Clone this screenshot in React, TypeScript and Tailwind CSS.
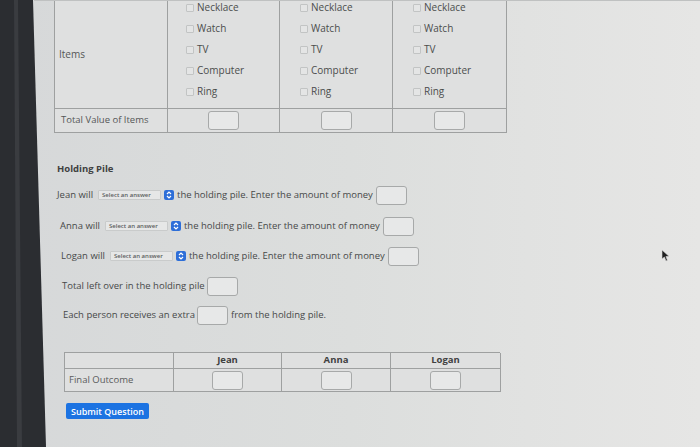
import React from "react";

const items = ["Necklace", "Watch", "TV", "Computer", "Ring"];

function Box({ className = "" }: { className?: string }) {
  return (
    <span
      className={`inline-block w-[31px] h-[19px] shrink-0 rounded-[3px] border border-[#a7a9a9] bg-[#e7e8e8] ${className}`}
    />
  );
}

function Check() {
  return <span className="inline-block w-[8px] h-[8px] shrink-0 rounded-[1px] border border-[#c2c4c4] bg-[#e4e5e5]" />;
}

function ItemList({ pad }: { pad: string }) {
  return (
    <div className={`flex flex-col -mt-[4px] ${pad}`}>
      {items.map((it) => (
        <div key={it} className="flex items-center gap-[3px] h-[21px]">
          <Check />
          <span className="text-[10px] text-[#4b4d4d]">{it}</span>
        </div>
      ))}
    </div>
  );
}

function SelectAnswer() {
  return (
    <span className="flex items-center gap-[3px] ml-[5px] mr-[3px]">
      <span className="flex items-center w-[63px] h-[10px] border border-[#c9cbcb] bg-[#e6e7e7] rounded-[1px] px-[3px] text-[6px] font-semibold leading-none text-[#5a5c5c] whitespace-nowrap">
        Select an answer
      </span>
      <span className="flex items-center justify-center w-[10px] h-[10px] rounded-[2px] bg-[#2d6ed8]">
        <svg width="6" height="8" viewBox="0 0 6 8">
          <path d="M1 3 L3 1 L5 3" fill="none" stroke="white" strokeWidth="1.2" />
          <path d="M1 5 L3 7 L5 5" fill="none" stroke="white" strokeWidth="1.2" />
        </svg>
      </span>
    </span>
  );
}

function PileLine({ name, ml, mt }: { name: string; ml: string; mt: string }) {
  return (
    <div className={`flex items-center h-[20px] ${ml} ${mt}`}>
      <span>{name} will</span>
      <SelectAnswer />
      <span>the holding pile. Enter the amount of money</span>
      <Box className="ml-[3px]" />
    </div>
  );
}

export default function App() {
  return (
    <div className="relative flex w-[700px] h-[447px] overflow-hidden bg-linear-to-r from-[#d6d8d9] via-[#dcdedd] to-[#e6e6e5] font-['Open_Sans',sans-serif]">
      {/* monitor bezel on the left */}
      <div className="w-[34px] h-full shrink-0">
        <svg width="48" height="447" className="overflow-visible">
          <polygon points="0,0 33,0 46,447 0,447" fill="#2b2d31" />
          <polygon points="14,0 18,0 22,447 17,447" fill="#3a3c40" />
        </svg>
      </div>

      <div className="flex flex-col flex-1 text-[#474949]">
        <div className="h-[1px] bg-[#bfc1c1] w-full" />

        {/* items table */}
        <div className="ml-[20px] grid grid-cols-[113px_112px_113px_114px] w-[452px] border-l border-[#9ea0a0] bg-[#dfe0e0]">
          <div className="h-[108px] border-r border-b border-[#9ea0a0] flex items-center pl-[4px] text-[10px] text-[#555757]">
            Items
          </div>
          <div className="h-[108px] border-r border-b border-[#9ea0a0] overflow-hidden">
            <ItemList pad="pl-[18px]" />
          </div>
          <div className="h-[108px] border-r border-b border-[#9ea0a0] overflow-hidden">
            <ItemList pad="pl-[20px]" />
          </div>
          <div className="h-[108px] border-r border-b border-[#9ea0a0] overflow-hidden">
            <ItemList pad="pl-[20px]" />
          </div>

          <div className="h-[24px] border-r border-b border-[#9ea0a0] flex items-center pl-[6px] text-[9.5px] text-[#555757]">
            Total Value of Items
          </div>
          <div className="h-[24px] border-r border-b border-[#9ea0a0] flex items-center justify-center">
            <Box />
          </div>
          <div className="h-[24px] border-r border-b border-[#9ea0a0] flex items-center justify-center">
            <Box />
          </div>
          <div className="h-[24px] border-r border-b border-[#9ea0a0] flex items-center justify-center">
            <Box />
          </div>
        </div>

        {/* holding pile */}
        <div className="flex flex-col text-[9.5px]">
          <div className="flex items-center h-[20px] ml-[23px] mt-[26px] font-bold text-[#3f4141]">Holding Pile</div>
          <PileLine name="Jean" ml="ml-[23px]" mt="mt-[6px]" />
          <PileLine name="Anna" ml="ml-[26px]" mt="mt-[11px]" />
          <PileLine name="Logan" ml="ml-[27px]" mt="mt-[10px]" />

          <div className="flex items-center h-[20px] ml-[28px] mt-[10px]">
            <span>Total left over in the holding pile</span>
            <Box className="ml-[2px]" />
          </div>
          <div className="flex items-center h-[20px] ml-[29px] mt-[9px]">
            <span>Each person receives an extra</span>
            <Box className="ml-[2px]" />
            <span className="ml-[3px]">from the holding pile.</span>
          </div>
        </div>

        {/* final outcome table */}
        <div className="ml-[30px] mt-[27px] grid grid-cols-[109px_108px_109px_110px] w-[436px] border-l border-t border-[#9ea0a0] bg-[#dfe0e0] text-[9.5px]">
          <div className="h-[16px] border-r border-b border-[#9ea0a0]" />
          <div className="h-[16px] border-r border-b border-[#9ea0a0] flex items-center justify-center font-bold text-[#3f4141]">
            Jean
          </div>
          <div className="h-[16px] border-r border-b border-[#9ea0a0] flex items-center justify-center font-bold text-[#3f4141]">
            Anna
          </div>
          <div className="h-[16px] border-r border-b border-[#9ea0a0] flex items-center justify-center font-bold text-[#3f4141]">
            Logan
          </div>

          <div className="h-[23px] border-r border-b border-[#9ea0a0] flex items-center pl-[4px] text-[#5a5c5c]">
            Final Outcome
          </div>
          <div className="h-[23px] border-r border-b border-[#9ea0a0] flex items-center justify-center">
            <Box className="h-[18px]" />
          </div>
          <div className="h-[23px] border-r border-b border-[#9ea0a0] flex items-center justify-center">
            <Box className="h-[18px]" />
          </div>
          <div className="h-[23px] border-r border-b border-[#9ea0a0] flex items-center justify-center">
            <Box className="h-[18px]" />
          </div>
        </div>

        <div className="flex ml-[32px] mt-[11px]">
          <button
            type="button"
            className="h-[16px] px-[5px] rounded-[2px] bg-[#1c73e2] text-white text-[9px] font-semibold leading-none"
          >
            Submit Question
          </button>
        </div>
      </div>

      {/* mouse pointer */}
      <svg className="absolute left-[661px] top-[249px]" width="9" height="13" viewBox="0 0 9 13">
        <path d="M1 1 L1 10 L3.4 8 L5 12 L6.4 11.3 L4.9 7.5 L8 7.3 Z" fill="#202020" stroke="#d8d8d8" strokeWidth="0.6" />
      </svg>
    </div>
  );
}
